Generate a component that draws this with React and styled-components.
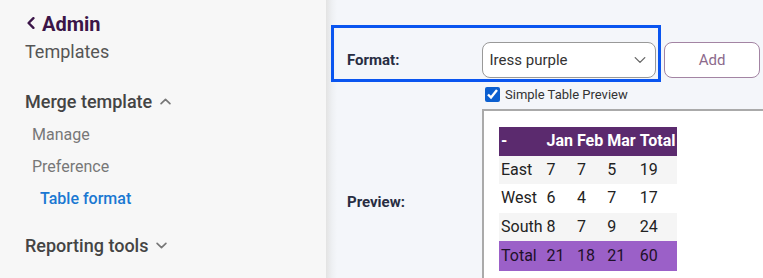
import styled, { createGlobalStyle } from "styled-components";

const GlobalStyle = createGlobalStyle`
  html, body {
    margin: 0;
    padding: 0;
    height: 100%;
    overflow: hidden;
    font-family: Roboto, "Liberation Sans", sans-serif;
  }
  #root {
    height: 100%;
  }
`;

const rows = [
  { name: "East", jan: 7, feb: 7, mar: 5, total: 19 },
  { name: "West", jan: 6, feb: 4, mar: 7, total: 17 },
  { name: "South", jan: 8, feb: 7, mar: 9, total: 24 },
];

const Chevron = ({ dir = "down", size = 10, color = "#777", stroke = 1.5 }) => {
  const paths = {
    down: "M1 3 L5 7 L9 3",
    up: "M1 7 L5 3 L9 7",
    left: "M7 1 L3 5 L7 9",
  };
  return (
    <svg width={size} height={size} viewBox="0 0 10 10" fill="none">
      <path
        d={paths[dir]}
        stroke={color}
        strokeWidth={stroke}
        strokeLinecap="round"
        strokeLinejoin="round"
      />
    </svg>
  );
};

export default function App() {
  return (
    <>
      <GlobalStyle />
      <Page>
        <Sidebar>
          <BackLink>
            <Chevron dir="left" size={12} color="#3b1548" stroke={2} />
            <span>Admin</span>
          </BackLink>
          <SubTitle>Templates</SubTitle>

          <Section $top={25}>
            Merge template
            <Chevron dir="up" size={11} color="#777" />
          </Section>
          <NavItem $first>Manage</NavItem>
          <NavItem>Preference</NavItem>
          <NavItem $active>Table format</NavItem>

          <Section $top={18}>
            Reporting tools
            <Chevron dir="down" size={11} color="#777" />
          </Section>
        </Sidebar>

        <Main>
          <FormatRow>
            <FocusBox>
              <FieldLabel>Format:</FieldLabel>
              <SelectBox>
                <span>Iress purple</span>
                <Chevron dir="down" size={12} color="#666" stroke={1.1} />
              </SelectBox>
            </FocusBox>
            <AddButton>Add</AddButton>
          </FormatRow>

          <CheckRow>
            <input type="checkbox" defaultChecked />
            <span>Simple Table Preview</span>
          </CheckRow>

          <PreviewRow>
            <PreviewLabel>Preview:</PreviewLabel>
            <PreviewBox>
              <Table>
                <thead>
                  <tr>
                    <th>-</th>
                    <th>Jan</th>
                    <th>Feb</th>
                    <th>Mar</th>
                    <th>Total</th>
                  </tr>
                </thead>
                <tbody>
                  {rows.map((r, i) => (
                    <BodyRow key={r.name} $striped={i % 2 === 0}>
                      <td>{r.name}</td>
                      <td>{r.jan}</td>
                      <td>{r.feb}</td>
                      <td>{r.mar}</td>
                      <td>{r.total}</td>
                    </BodyRow>
                  ))}
                  <TotalRow>
                    <td>Total</td>
                    <td>21</td>
                    <td>18</td>
                    <td>21</td>
                    <td>60</td>
                  </TotalRow>
                </tbody>
              </Table>
            </PreviewBox>
          </PreviewRow>
        </Main>
      </Page>
    </>
  );
}

const Page = styled.div`
  display: flex;
  width: 763px;
  height: 278px;
  overflow: hidden;
`;

const Sidebar = styled.nav`
  width: 326px;
  flex-shrink: 0;
  background: #f7f7f7;
  padding: 12px 0 0 25px;
  box-sizing: border-box;
  display: flex;
  flex-direction: column;
`;

const BackLink = styled.div`
  display: flex;
  align-items: center;
  gap: 5px;
  height: 24px;
  font-size: 20px;
  font-weight: 700;
  color: #3b1548;

  svg {
    margin-top: -2px;
  }
`;

const SubTitle = styled.div`
  margin-top: 4px;
  height: 24px;
  line-height: 24px;
  font-size: 18px;
  color: #555;
`;

const Section = styled.div`
  margin-top: ${(p) => p.$top}px;
  height: 24px;
  display: flex;
  align-items: center;
  gap: 8px;
  font-size: 18px;
  font-weight: 500;
  color: #444;
`;

const NavItem = styled.div`
  margin-top: ${(p) => (p.$first ? 6 : 0)}px;
  height: 32px;
  line-height: 32px;
  font-size: 16px;
  padding-left: ${(p) => (p.$active ? 15 : 7)}px;
  font-weight: ${(p) => (p.$active ? 500 : 400)};
  color: ${(p) => (p.$active ? "#1a78d2" : "#777")};
`;

const Main = styled.main`
  flex: 1;
  background: linear-gradient(to right, #e3e3e3 0, #eef0f3 6px, #f4f6fa 11px);
  padding: 25px 0 0 5px;
  display: flex;
  flex-direction: column;
  overflow: hidden;
`;

const FormatRow = styled.div`
  display: flex;
  align-items: flex-start;
`;

const FocusBox = styled.div`
  width: 330px;
  box-sizing: border-box;
  border: 3px solid #0a55f0;
  padding: 14px 2px 1px 13px;
  display: flex;
  align-items: center;
`;

const FieldLabel = styled.label`
  width: 135px;
  font-size: 15px;
  font-weight: 700;
  color: #282d42;
`;

const SelectBox = styled.div`
  width: 175px;
  height: 36px;
  box-sizing: border-box;
  border: 1.5px solid #999;
  border-radius: 8px;
  background: #fff;
  display: flex;
  align-items: center;
  justify-content: space-between;
  padding: 0 9px 0 7px;
  font-size: 15px;
  color: #333;
`;

const AddButton = styled.button`
  margin: 17px 0 0 3px;
  width: 96px;
  height: 36px;
  border: 1.5px solid #a384a3;
  border-radius: 8px;
  background: #fff;
  font-family: Roboto, "Liberation Sans", sans-serif;
  font-size: 15px;
  color: #8c6a8c;
`;

const CheckRow = styled.label`
  margin: 5px 0 0 151px;
  display: flex;
  align-items: center;
  gap: 5px;
  height: 16px;
  font-size: 13px;
  color: #333;

  input {
    width: 15px;
    height: 15px;
    margin: 0 0 0 3px;
    accent-color: #0b5fd0;
  }
`;

const PreviewRow = styled.div`
  margin-top: 7px;
  display: flex;
  align-items: stretch;
`;

const PreviewLabel = styled.div`
  width: 151px;
  flex-shrink: 0;
  box-sizing: border-box;
  padding: 84px 0 0 16px;
  font-size: 15px;
  font-weight: 700;
  color: #282d42;
`;

const PreviewBox = styled.div`
  width: 330px;
  flex-shrink: 0;
  background: #fff;
  border-top: 2px solid #aaa;
  border-left: 2px solid #aaa;
  padding: 16px 16px 24px 15px;
`;

const Table = styled.table`
  border-collapse: collapse;
  font-size: 16px;
  color: #222;

  th,
  td {
    padding: 4px 2px;
    line-height: 20.5px;
    text-align: left;
    white-space: nowrap;
  }

  th {
    background: #5b2a6e;
    color: #fff;
    font-weight: 700;
  }
`;

const BodyRow = styled.tr`
  background: ${(p) => (p.$striped ? "#f5f5f5" : "#fff")};
`;

const TotalRow = styled.tr`
  background: #9b60c8;

  td {
    color: #1e1028;
    padding-top: 5px;
  }
`;
